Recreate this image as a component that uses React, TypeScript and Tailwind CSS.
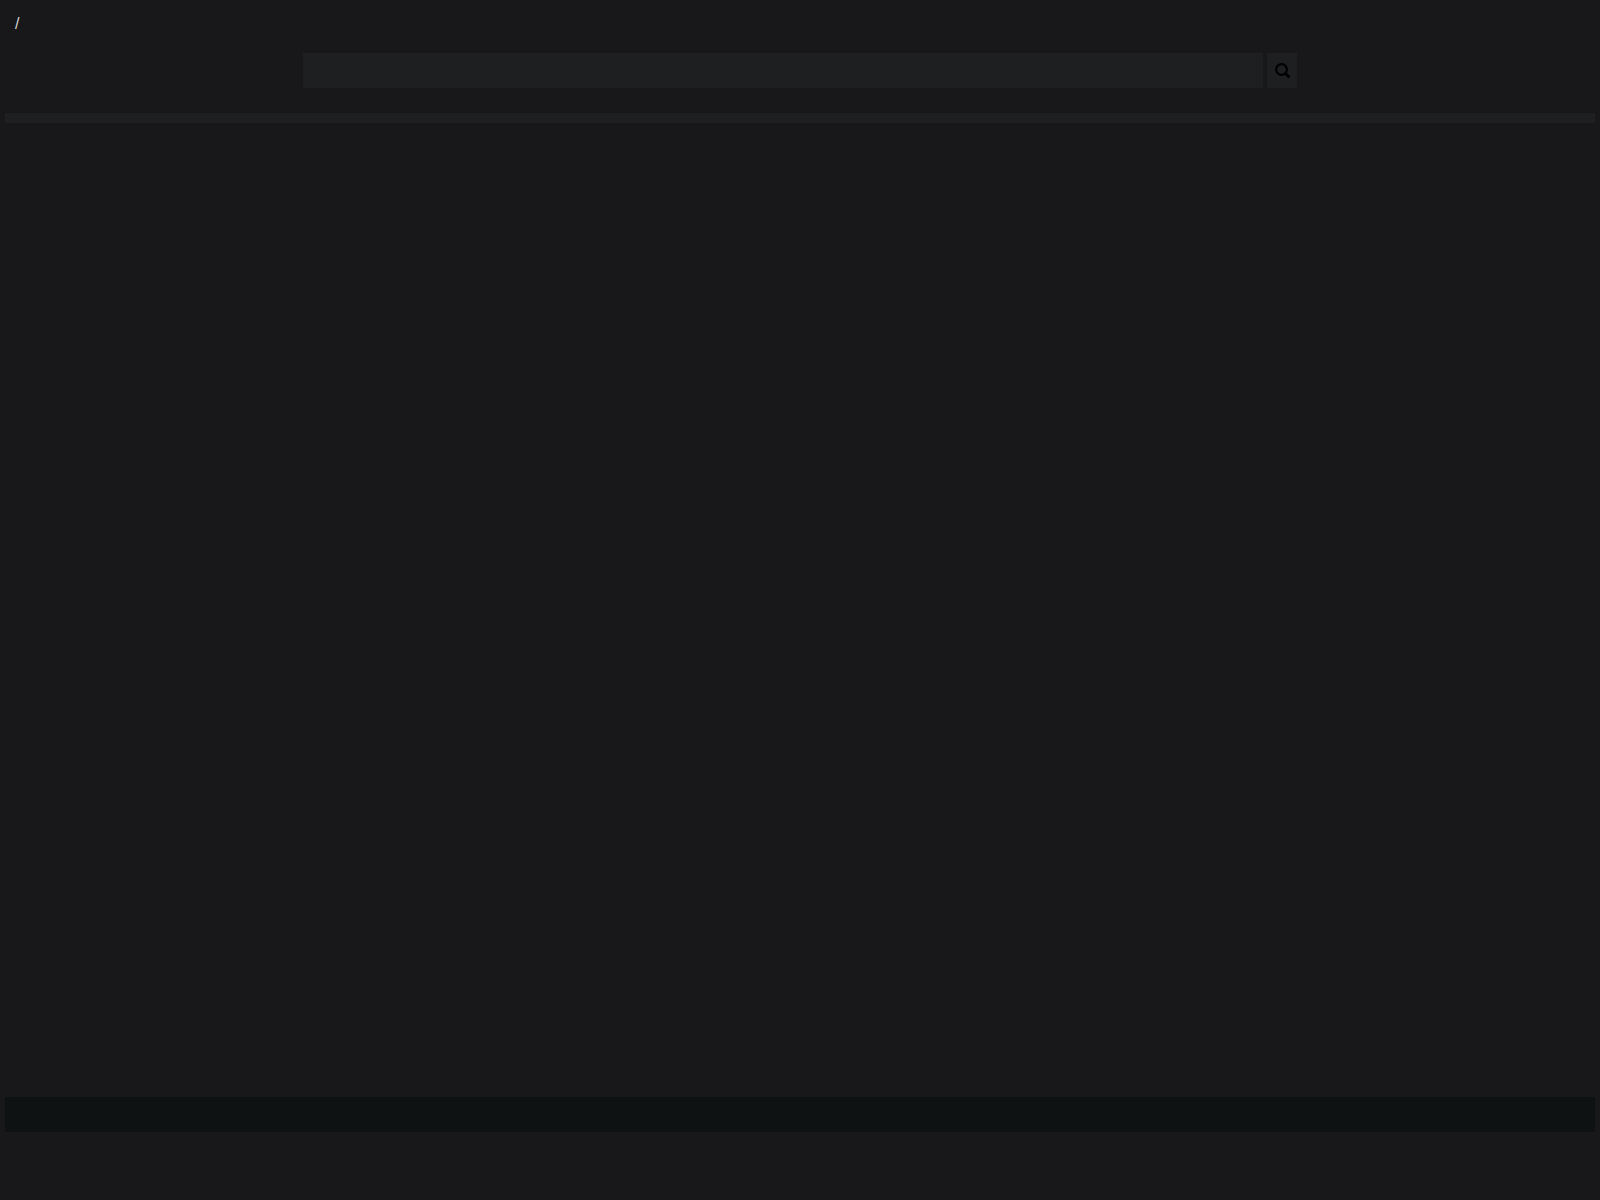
import { useState } from 'react';
import type { FormEvent } from 'react';

function SearchIcon() {
  return (
    <svg className="h-[15px] w-[15px]" viewBox="0 0 15 15" fill="none" stroke="#000000" aria-hidden="true">
      <circle cx="6.5" cy="6.5" r="5.4" strokeWidth="2.1" />
      <path d="M10.7 10.7l2.9 2.9" strokeWidth="2.8" strokeLinecap="round" />
    </svg>
  );
}

export default function App() {
  const [query, setQuery] = useState<string>('');

  const handleSubmit = (e: FormEvent<HTMLFormElement>) => {
    e.preventDefault();
    setQuery(query.trim());
  };

  return (
    <div className="flex min-h-screen flex-col bg-[#18181a] font-['Liberation_Sans',Arial,sans-serif] text-base text-[#d4d4d4]">
      <nav className="px-[15px] pt-[15px]" aria-label="Path">
        <a href="/" className="block w-fit leading-[18px]">/</a>
      </nav>

      <form onSubmit={handleSubmit} className="mt-5 flex justify-center gap-1" role="search">
        <input
          type="text"
          aria-label="Search"
          value={query}
          onChange={(e) => setQuery(e.target.value)}
          className="h-[35px] w-3/5 bg-[#1d1f20] px-2 outline-none"
        />
        <button
          type="submit"
          aria-label="Submit search"
          className="flex h-[35px] w-[30px] items-center justify-center bg-[#1d1f20]"
        >
          <SearchIcon />
        </button>
      </form>

      <main className="flex-1 px-[5px] pt-[25px]">
        <div className="h-2.5 bg-[#1d1f20]" />
      </main>

      <footer className="px-[5px] pb-[68px]">
        <div className="h-[35px] bg-[#0e1212]" />
      </footer>
    </div>
  );
}
